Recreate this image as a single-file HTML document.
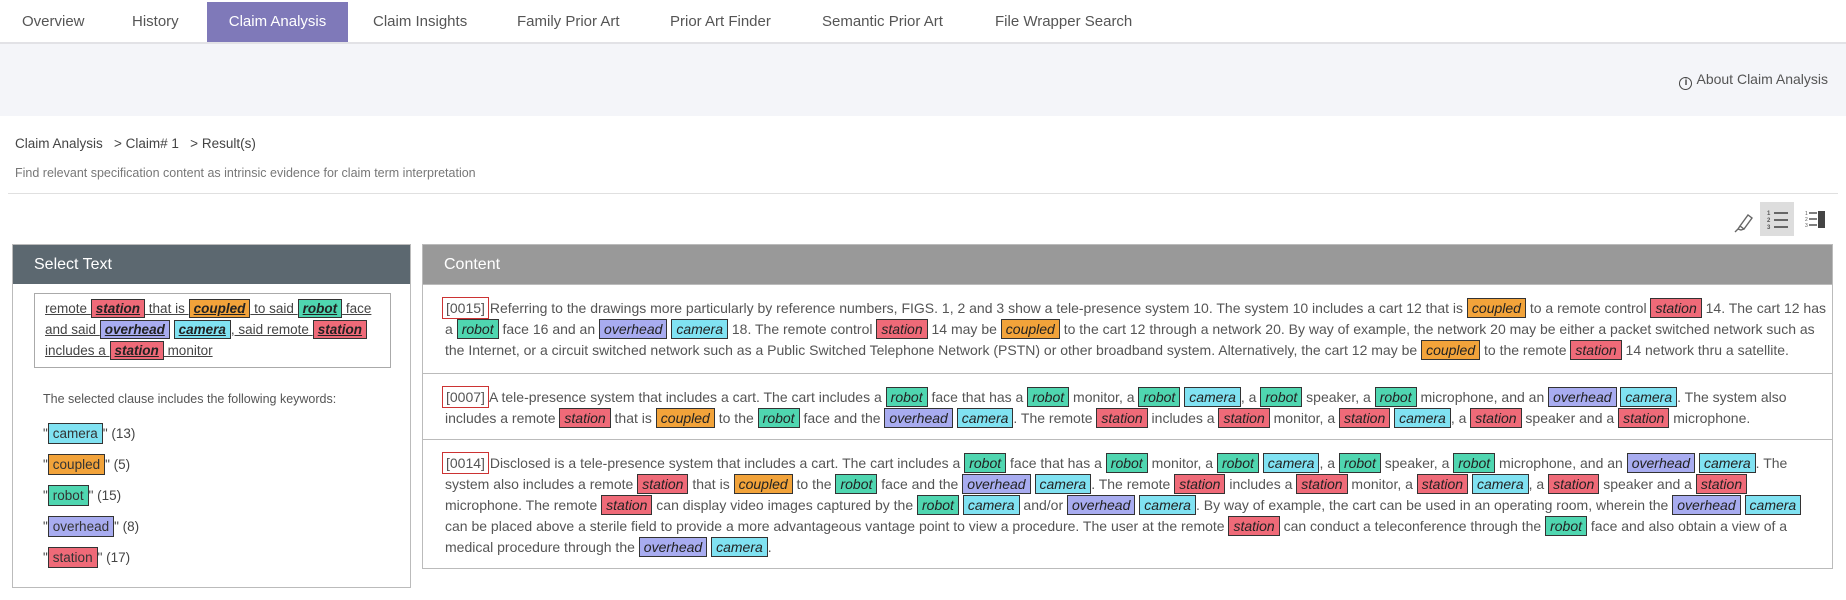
<!DOCTYPE html>
<html><head><meta charset="utf-8">
<style>
*{box-sizing:border-box;margin:0;padding:0}
body{width:1846px;height:600px;overflow:hidden;background:#fff;font-family:"Liberation Sans",sans-serif;color:#444;position:relative}
.tabs{position:absolute;left:0;top:0;width:1846px;height:44px;border-bottom:2px solid #e2e2e6;background:#fff}
.tab{position:absolute;top:2px;height:40px;line-height:40px;font-size:15px;color:#555}
.tab.act{background:#7f79b9;color:#fff;left:207px;width:141px;text-align:center}
.band{position:absolute;left:0;top:44px;width:1846px;height:72px;background:#f4f5f9}
.about{position:absolute;right:18px;top:71px;font-size:14px;color:#555}
.about i{display:inline-block;width:13px;height:13px;border:1.5px solid #444;border-radius:50%;font-style:normal;font-size:10px;line-height:10px;text-align:center;font-weight:bold;margin-right:4px;vertical-align:-1px;color:#444}
.main{position:absolute;left:3px;top:116px;width:1843px;height:484px;background:#fff}
.bc{position:absolute;left:15px;top:136px;font-size:13.5px;color:#444}
.sub{position:absolute;left:15px;top:166px;font-size:12.5px;color:#777}
.hr{position:absolute;left:8px;top:193px;width:1830px;height:1px;background:#e0e0e0}
.btnsel{position:absolute;left:1760px;top:202px;width:34px;height:34px;background:#ddd}
.panel{position:absolute;border:1px solid #bbb;background:#fff}
.ph{height:39px;line-height:39px;color:#fff;font-size:16px;padding-left:21px}
.k{padding:1px 4px;border:1px solid #333;font-style:italic;color:#222}
.s{background:#ef6a78}.c{background:#f2a33a}.r{background:#4fd6b0}.o{background:#a8acf0}.m{background:#80e2f2}
.sel{position:absolute;left:21px;top:48px;width:357px;height:75px;border:1px solid #aaa;padding:4px 10px;font-size:13.5px;line-height:21px;color:#444;white-space:nowrap}
.sel span.u{text-decoration:underline}
.sel .k{font-weight:bold;text-decoration:underline}
.kw{position:absolute;left:30px;font-size:13.5px;color:#444}
.kw .k{font-style:normal;padding:2px 4px;color:#333}
.row{position:absolute;left:0;width:100%;border-top:1px solid #bbb;padding:13px 0 0 22px;font-size:14px;line-height:21px;color:#555;white-space:nowrap;overflow:hidden}
.num{outline:1px solid #c33;outline-offset:2px;padding:0 1px;position:relative}
</style></head><body>
<div class="tabs">
<span class="tab" style="left:22px">Overview</span>
<span class="tab" style="left:132px">History</span>
<span class="tab act">Claim Analysis</span>
<span class="tab" style="left:373px">Claim Insights</span>
<span class="tab" style="left:517px">Family Prior Art</span>
<span class="tab" style="left:670px">Prior Art Finder</span>
<span class="tab" style="left:822px">Semantic Prior Art</span>
<span class="tab" style="left:995px">File Wrapper Search</span>
</div>
<div class="band"></div>
<div class="about"><i>i</i>About Claim Analysis</div>
<div class="main"></div>
<div class="bc">Claim Analysis &nbsp; &gt; Claim# 1 &nbsp; &gt; Result(s)</div>
<div class="sub">Find relevant specification content as intrinsic evidence for claim term interpretation</div>
<div class="hr"></div>
<div class="btnsel"></div>
<svg style="position:absolute;left:1730px;top:208px" width="26" height="26" viewBox="0 0 26 26" fill="none" stroke="#666" stroke-width="1.4"><path d="M10 18 L18 7 L22 10 L14 21 Z M10 18 L8 21 L11 22 L14 21 M8 21 L5 24"/></svg>
<svg style="position:absolute;left:1766px;top:208px" width="24" height="24" viewBox="0 0 24 24"><g fill="#555" font-size="6" font-family="Liberation Sans" font-weight="bold"><text x="1" y="7">1</text><text x="1" y="14">2</text><text x="1" y="21">3</text></g><g stroke="#666" stroke-width="2"><path d="M8 5H22M8 12H22M8 19H22"/></g></svg>
<svg style="position:absolute;left:1804px;top:208px" width="24" height="24" viewBox="0 0 24 24"><g fill="#555" font-size="5" font-family="Liberation Sans"><text x="1" y="7">1</text><text x="1" y="13">2</text><text x="1" y="19">3</text></g><g stroke="#555" stroke-width="1.5"><path d="M5 5H13M5 11H13M5 17H13"/></g><rect x="14" y="3" width="7" height="17" fill="#444"/></svg>

<div class="panel" style="left:12px;top:244px;width:399px;height:344px">
<div class="ph" style="background:#5c6870">Select Text</div>
<div class="sel"><span class="u">remote </span><span class="k s">station</span><span class="u"> that is </span><span class="k c">coupled</span><span class="u"> to said </span><span class="k r">robot</span><span class="u"> face</span><br><span class="u">and said </span><span class="k o">overhead</span> <span class="k m">camera</span><span class="u">, said remote </span><span class="k s">station</span><br><span class="u">includes a </span><span class="k s">station</span><span class="u"> monitor</span></div>
<div class="kw" style="top:147px;font-size:12.5px;color:#555">The selected clause includes the following keywords:</div>
<div class="kw" style="top:181px">"<span class="k m">camera</span>" (13)</div>
<div class="kw" style="top:212px">"<span class="k c">coupled</span>" (5)</div>
<div class="kw" style="top:243px">"<span class="k r">robot</span>" (15)</div>
<div class="kw" style="top:274px">"<span class="k o">overhead</span>" (8)</div>
<div class="kw" style="top:305px">"<span class="k s">station</span>" (17)</div>
</div>

<div class="panel" style="left:422px;top:244px;width:1411px;height:325px">
<div class="ph" style="background:#999">Content</div>
<div class="row" style="top:39px;height:89px"><span class="num">[0015]</span> Referring to the drawings more particularly by reference numbers, FIGS. 1, 2 and 3 show a tele-presence system 10. The system 10 includes a cart 12 that is <span class="k c">coupled</span> to a remote control <span class="k s">station</span> 14. The cart 12 has<br>a <span class="k r">robot</span> face 16 and an <span class="k o">overhead</span> <span class="k m">camera</span> 18. The remote control <span class="k s">station</span> 14 may be <span class="k c">coupled</span> to the cart 12 through a network 20. By way of example, the network 20 may be either a packet switched network such as<br>the Internet, or a circuit switched network such as a Public Switched Telephone Network (PSTN) or other broadband system. Alternatively, the cart 12 may be <span class="k c">coupled</span> to the remote <span class="k s">station</span> 14 network thru a satellite.</div>
<div class="row" style="top:128px;height:66px"><span class="num">[0007]</span> A tele-presence system that includes a cart. The cart includes a <span class="k r">robot</span> face that has a <span class="k r">robot</span> monitor, a <span class="k r">robot</span> <span class="k m">camera</span>, a <span class="k r">robot</span> speaker, a <span class="k r">robot</span> microphone, and an <span class="k o">overhead</span> <span class="k m">camera</span>. The system also<br>includes a remote <span class="k s">station</span> that is <span class="k c">coupled</span> to the <span class="k r">robot</span> face and the <span class="k o">overhead</span> <span class="k m">camera</span>. The remote <span class="k s">station</span> includes a <span class="k s">station</span> monitor, a <span class="k s">station</span> <span class="k m">camera</span>, a <span class="k s">station</span> speaker and a <span class="k s">station</span> microphone.</div>
<div class="row" style="top:194px;height:130px"><span class="num">[0014]</span> Disclosed is a tele-presence system that includes a cart. The cart includes a <span class="k r">robot</span> face that has a <span class="k r">robot</span> monitor, a <span class="k r">robot</span> <span class="k m">camera</span>, a <span class="k r">robot</span> speaker, a <span class="k r">robot</span> microphone, and an <span class="k o">overhead</span> <span class="k m">camera</span>. The<br>system also includes a remote <span class="k s">station</span> that is <span class="k c">coupled</span> to the <span class="k r">robot</span> face and the <span class="k o">overhead</span> <span class="k m">camera</span>. The remote <span class="k s">station</span> includes a <span class="k s">station</span> monitor, a <span class="k s">station</span> <span class="k m">camera</span>, a <span class="k s">station</span> speaker and a <span class="k s">station</span><br>microphone. The remote <span class="k s">station</span> can display video images captured by the <span class="k r">robot</span> <span class="k m">camera</span> and/or <span class="k o">overhead</span> <span class="k m">camera</span>. By way of example, the cart can be used in an operating room, wherein the <span class="k o">overhead</span> <span class="k m">camera</span><br>can be placed above a sterile field to provide a more advantageous vantage point to view a procedure. The user at the remote <span class="k s">station</span> can conduct a teleconference through the <span class="k r">robot</span> face and also obtain a view of a<br>medical procedure through the <span class="k o">overhead</span> <span class="k m">camera</span>.</div>
</div>
</body></html>
